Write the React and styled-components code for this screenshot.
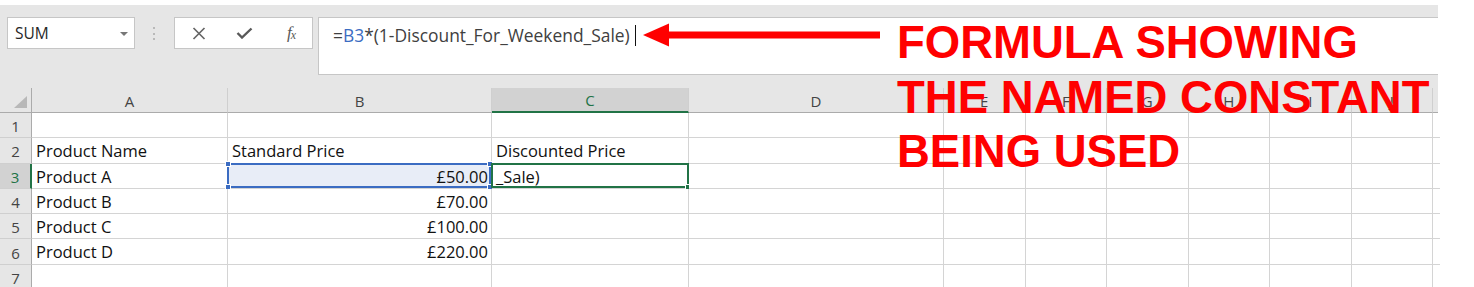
import React from "react";
import styled, { createGlobalStyle, css } from "styled-components";

const GlobalStyle = createGlobalStyle`
  html, body { margin: 0; padding: 0; background: #fff; }
  body { font-family: "Open Sans", "Noto Sans", sans-serif; }
  * { box-sizing: border-box; }
`;

const UI_FONT = `"Open Sans", "Noto Sans", sans-serif`;
const GREEN = "#217346";
const BLUE = "#3b6cc2";

const Page = styled.div`
  position: relative;
  width: 1474px;
  height: 287px;
  overflow: hidden;
  display: flex;
  align-items: flex-start;
  background: #fff;
  font-family: ${UI_FONT};
`;

const Workbook = styled.div`
  width: 1438px;
  flex: none;
  display: flex;
  flex-direction: column;
  padding-top: 5px;
  background: #fff;
`;

const Ribbon = styled.div`
  flex: none;
  height: 83px;
  background: #e6e6e6;
  display: flex;
  align-items: flex-start;
  padding: 12px 0 0 7px;
`;

const NameBox = styled.div`
  width: 128px;
  height: 32px;
  background: #fff;
  border: 1px solid #c6c6c6;
  display: flex;
  align-items: center;
  justify-content: space-between;
  padding: 0 6px 0 7px;
  font-size: 15.5px;
  color: #262626;
`;

const DropCaret = styled.span`
  width: 0;
  height: 0;
  border-left: 4.5px solid transparent;
  border-right: 4.5px solid transparent;
  border-top: 4px solid #777;
  margin-top: 1px;
`;

const Grip = styled.div`
  margin: 10px 0 0 18px;
  width: 3px;
  display: flex;
  flex-direction: column;
  gap: 3.5px;
`;

const GripDot = styled.span`
  width: 2px;
  height: 2px;
  background: #b9b9b9;
`;

const FxButtons = styled.div`
  margin-left: 18px;
  width: 139px;
  height: 32px;
  background: #fff;
  border: 1px solid #c6c6c6;
  display: grid;
  grid-template-columns: 44px 46px 48px;
  align-items: center;
  justify-items: center;
  padding-left: 2px;
`;

const FxGlyph = styled.span`
  font-family: "Liberation Serif", "DejaVu Serif", serif;
  font-style: italic;
  font-size: 17px;
  color: #595959;
  letter-spacing: -1px;
  & sub {
    font-size: 12px;
    vertical-align: -1px;
  }
`;

const FormulaBar = styled.div`
  margin-left: 5px;
  flex: 1;
  height: 58px;
  background: #fff;
  border: 1px solid #c6c6c6;
  border-right: none;
  padding: 4px 0 0 14px;
  font-size: 17.4px;
  line-height: 26px;
  color: #404040;
  display: flex;
  align-items: flex-start;
`;

const RefToken = styled.span`
  color: ${BLUE};
`;

const Caret = styled.span`
  display: inline-block;
  width: 1.5px;
  height: 21px;
  background: #111;
  margin: 3px 0 0 5px;
`;

const Sheet = styled.div`
  flex: none;
  display: grid;
  grid-template-columns: ${(p) => p.$cols};
  grid-template-rows: 25px repeat(7, 25.3px);
  font-size: 16.5px;
  color: #111;
`;

const CornerCell = styled.div`
  background: #e6e6e6;
  border-right: 1px solid #ababab;
  border-bottom: 1px solid #ababab;
  position: relative;
`;

const CornerTriangle = styled.span`
  position: absolute;
  right: 4px;
  bottom: 4px;
  width: 13px;
  height: 12px;
  background: #b8b8b8;
  clip-path: polygon(100% 0, 100% 100%, 0 100%);
`;

const ColHeader = styled.div`
  background: ${(p) => (p.$active ? "#d2d2d2" : "#e6e6e6")};
  border-right: ${(p) => (p.$last ? "none" : "1px solid #cfcfcf")};
  border-bottom: ${(p) => (p.$active ? `2px solid ${GREEN}` : "1px solid #ababab")};
  color: ${(p) => (p.$active ? GREEN : "#444")};
  font-size: 15px;
  display: flex;
  align-items: center;
  justify-content: center;
  padding-top: 1px;
`;

const RowHeader = styled.div`
  background: ${(p) => (p.$active ? "#d2d2d2" : "#e6e6e6")};
  border-right: ${(p) => (p.$active ? `2px solid ${GREEN}` : "1px solid #ababab")};
  border-bottom: 1px solid #cfcfcf;
  color: ${(p) => (p.$active ? GREEN : "#444")};
  font-size: 15px;
  display: flex;
  align-items: center;
  justify-content: center;
  padding-top: 2px;
`;

const Cell = styled.div`
  position: relative;
  border-right: ${(p) => (p.$last ? "none" : "1px solid #d4d4d4")};
  border-bottom: 1px solid #d4d4d4;
  background: ${(p) => (p.$tint ? "#e8edf7" : "#fff")};
  padding: 1px 3px 0 4px;
  line-height: 24px;
  white-space: nowrap;
  text-align: ${(p) => (p.$right ? "right" : "left")};
`;

const frameBase = css`
  position: absolute;
  top: -1px;
  left: -1px;
  right: 0;
  bottom: 0;
  pointer-events: none;
`;

const RefFrame = styled.span`
  ${frameBase};
  border: 2px solid ${BLUE};
`;

const ActiveFrame = styled.span`
  ${frameBase};
  right: -1px;
  border: 2px solid ${GREEN};
`;

const Handle = styled.span`
  position: absolute;
  width: 6px;
  height: 6px;
  background: ${(p) => p.$color};
  border: 1px solid #fff;
  ${(p) => (p.$top ? "top: -4px;" : "bottom: -4px;")}
  ${(p) => (p.$left ? "left: -4px;" : "right: -4px;")}
`;

const Annotation = styled.div`
  position: absolute;
  left: 897px;
  top: 16px;
  font-family: "Liberation Sans", Arial, sans-serif;
  font-weight: 700;
  font-size: 45.5px;
  line-height: 54.5px;
  color: #ff0000;
  white-space: nowrap;
  pointer-events: none;
`;

const ArrowSvg = styled.svg`
  position: absolute;
  left: 640px;
  top: 22px;
  pointer-events: none;
`;

const COLUMNS = [
  { id: "A", w: "196px" },
  { id: "B", w: "264px" },
  { id: "C", w: "197px", active: true },
  { id: "D", w: "255px" },
  { id: "E", w: "81.5px" },
  { id: "F", w: "81.5px" },
  { id: "G", w: "81.5px" },
  { id: "H", w: "81.5px" },
  { id: "I", w: "81.5px" },
  { id: "J", w: "81.5px" },
  { id: "K", w: "5px", label: "", last: true },
];

const ROWS = [
  { n: 1 },
  { n: 2, A: "Product Name", B: "Standard Price", C: "Discounted Price" },
  { n: 3, A: "Product A", B: "£50.00", C: "_Sale)", active: true },
  { n: 4, A: "Product B", B: "£70.00" },
  { n: 5, A: "Product C", B: "£100.00" },
  { n: 6, A: "Product D", B: "£220.00" },
  { n: 7 },
];

const isNumber = (v) => typeof v === "string" && v.startsWith("£");

function Corners({ color, fillOnly }) {
  if (fillOnly) return <Handle $color={color} />;
  return (
    <>
      <Handle $color={color} $top $left />
      <Handle $color={color} $top />
      <Handle $color={color} $left />
      <Handle $color={color} />
    </>
  );
}

export default function App() {
  const cols = "32px " + COLUMNS.map((c) => c.w).join(" ");
  return (
    <Page>
      <GlobalStyle />
      <Workbook>
        <Ribbon>
          <NameBox>
            <span>SUM</span>
            <DropCaret />
          </NameBox>
          <Grip>
            <GripDot />
            <GripDot />
            <GripDot />
          </Grip>
          <FxButtons>
            <svg width="14" height="13" viewBox="0 0 14 13">
              <path d="M1.5 1 L12.5 12 M12.5 1 L1.5 12" stroke="#666" strokeWidth="1.7" fill="none" />
            </svg>
            <svg width="17" height="12" viewBox="0 0 17 12">
              <path d="M1.5 6 L6 10.5 L15.5 1.5" stroke="#595959" strokeWidth="2.4" fill="none" />
            </svg>
            <FxGlyph>
              f<sub>x</sub>
            </FxGlyph>
          </FxButtons>
          <FormulaBar>
            <span>
              =<RefToken>B3</RefToken>*(1-Discount_For_Weekend_Sale)
            </span>
            <Caret />
          </FormulaBar>
        </Ribbon>
        <Sheet $cols={cols}>
          <CornerCell>
            <CornerTriangle />
          </CornerCell>
          {COLUMNS.map((c) => (
            <ColHeader key={c.id} $active={c.active} $last={c.last}>
              {c.label ?? c.id}
            </ColHeader>
          ))}
          {ROWS.map((r) => (
            <React.Fragment key={r.n}>
              <RowHeader $active={r.active}>{r.n}</RowHeader>
              {COLUMNS.map((c) => {
                const isRef = r.n === 3 && c.id === "B";
                const isActive = r.n === 3 && c.id === "C";
                return (
                  <Cell key={c.id} $right={isNumber(r[c.id])} $last={c.last} $tint={isRef}>
                    {r[c.id]}
                    {isRef && (
                      <RefFrame>
                        <Corners color={BLUE} />
                      </RefFrame>
                    )}
                    {isActive && (
                      <ActiveFrame>
                        <Corners color={GREEN} fillOnly />
                      </ActiveFrame>
                    )}
                  </Cell>
                );
              })}
            </React.Fragment>
          ))}
        </Sheet>
      </Workbook>
      <ArrowSvg width="244" height="26" viewBox="0 0 244 26">
        <polygon points="3,13 29,1.5 29,24.5" fill="#ff0000" />
        <rect x="26" y="9.5" width="214" height="7" fill="#ff0000" />
      </ArrowSvg>
      <Annotation>
        FORMULA SHOWING
        <br />
        THE NAMED CONSTANT
        <br />
        BEING USED
      </Annotation>
    </Page>
  );
}
